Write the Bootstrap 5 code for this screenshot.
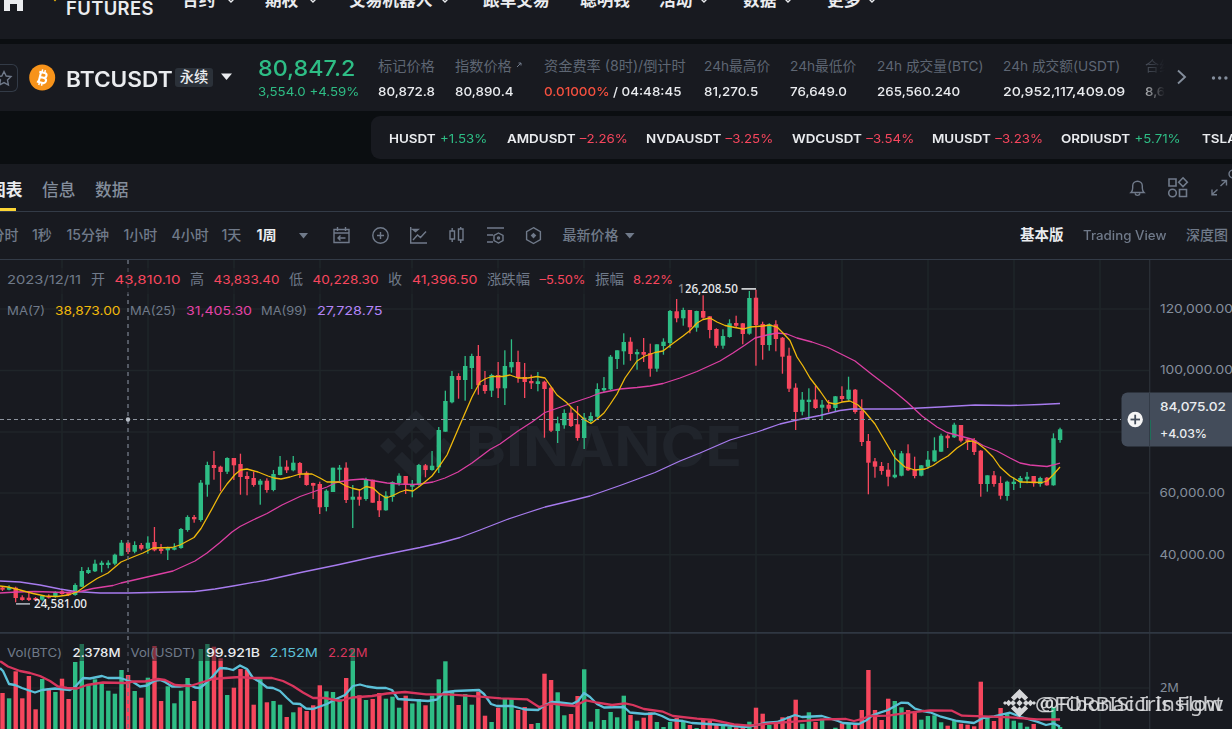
<!DOCTYPE html>
<html lang="zh-CN" data-bs-theme="dark">
<head>
<meta charset="utf-8">
<title>BTCUSDT 永续</title>
<link href="https://cdn.jsdelivr.net/npm/bootstrap@5.3.0/dist/css/bootstrap.min.css" rel="stylesheet">
<style>
:root{--panel:#181a20;--page:#0b0e11;--line:#333b47;--muted:#707a8a;--txt:#eaecef;--up:#2ebd85;--down:#f6465d;--gold:#f0b90b}
body{background:var(--page);color:var(--txt);font-family:Inter,"Noto Sans CJK SC",sans-serif;font-size:13px;line-height:20px;width:1232px;height:729px;overflow:hidden}
.panel-bg{background:var(--panel)}
.track{display:grid;align-items:center;justify-content:start;white-space:nowrap}
.muted{color:var(--muted)}.up{color:var(--up)}.down{color:var(--down)}
svg{display:block;overflow:visible}
.ico{fill:none;stroke:var(--muted);stroke-width:1.4}
.wide{transform:scaleX(1.09);transform-origin:left center}
.topnav{height:39px;overflow:hidden;margin-bottom:5px}
.topnav .track{height:24px;margin-top:-19px;grid-template-columns:54px 12px 116px 83px 84px 134px 97px 79px 84px 84px 60px;font-size:16.7px;font-weight:600}
.topnav .home{margin-top:4px}
.brand{font-size:18.4px;letter-spacing:.4px;padding-top:17px;font-weight:600}
.menu-item{display:flex;align-items:center;gap:8px}
.menu-item.roomy{gap:11px}
.symbol{height:67px;margin-bottom:5px}
.symbol .track{height:67px;grid-template-columns:29px 37px 109px 45px 38px 120px 77px 89px 160px 86px 87px 126px 142px 36px 34px 18px}
.starbox{width:18px;height:28px;border:1px solid #333b47;border-left:0;border-radius:0 6px 6px 0}
.pair{font-size:20.8px;font-weight:600;padding-top:4px}
.tagbox{background:#2b3139;border-radius:3px;font-size:14.3px;font-weight:500;width:38px;height:19px;line-height:18px;text-align:center}
.lastp{font-size:22px;line-height:25px;font-weight:500;padding-top:3px;transform:scaleX(1.06);transform-origin:left center}
.chg{font-size:12.2px;line-height:20px;padding-top:1px}
.stat{padding-top:3px}
.stat .lab{font-size:14.2px;line-height:20px;color:#5e6673;font-weight:400}
.stat .lat{font-size:13.7px}
.stat .val{font-size:12.2px;line-height:20px;font-weight:500;margin-top:6px;transform:scaleX(1.1);transform-origin:left center}
.stat .val.longer{transform:scaleX(1.16)}
.fund{color:#f6503f}
.faded{-webkit-mask-image:linear-gradient(90deg,#000b,#0000 20px);mask-image:linear-gradient(90deg,#000b,#0000 20px);overflow:hidden;width:20px}
.ticker{height:43px;margin-left:371px;border-radius:9px 0 0 9px;margin-bottom:5px;overflow:hidden}
.ticker .track{height:45px;padding-left:18px;grid-template-columns:118px 139px 146px 139.5px 129.5px 141px 50px;font-size:12.2px}
.ticker b{font-weight:600;font-size:12.3px;margin-right:4px}
.tabsrow{height:48px;border-bottom:1px solid var(--line);font-size:16.7px;font-weight:500;color:#848e9c}
.tabsrow .track{height:47px;grid-template-columns:42px 53px 1035px 37px 42px 40px;padding-top:4px}
.tabsrow svg{margin-top:-4px}
.tabon{font-weight:700;margin-left:-11px;position:relative}
.tabon::after{content:"";position:absolute;left:0;bottom:-11px;width:27px;height:3px;background:#fcd535}
.timerow{height:48px;border-bottom:1px solid var(--line);font-size:14px;font-weight:500;color:var(--muted)}
.timerow .track{height:46px;grid-template-columns:32px 34.5px 57px 48px 50px 35px 42px 33px 39px 38px 39px 38px 39px 38px 62px 395.5px 63px 103px 50px}
.first-int{margin-left:-9.500px}
.tv{font-size:12.7px;padding-top:2px;transform:scaleX(1.05);transform-origin:left center}
.basic{font-size:14.500px}
.on{color:var(--txt);font-weight:700}
.chart{height:469px;overflow:hidden}
.chart text{font-family:Inter,"Noto Sans CJK SC",sans-serif}
</style>
</head>
<body>
<header class="topnav panel-bg">
  <div class="track">
    <svg class="home" width="24" height="24" viewBox="0 0 24 24"><path d="M4 8L13.500 0 23 8V21H17V14H10V21H4Z" fill="#eaecef"/></svg>
    <svg width="5" height="5" viewBox="0 0 5 5"><path d="M-1.500 1.500h5L1 4.500Z" fill="#f0b90b"/></svg>
    <div class="brand">FUTURES</div>
    <div class="menu-item roomy">合约<svg width="10" height="6"><path d="M1 1l4 4 4-4" fill="none" stroke="#eaecef" stroke-width="1.400"/></svg></div>
    <div class="menu-item roomy">期权<svg width="10" height="6"><path d="M0 1l4 4 4-4" fill="none" stroke="#eaecef" stroke-width="1.400"/></svg></div>
    <div class="menu-item">交易机器人<svg width="10" height="6"><path d="M1 1l4 4 4-4" fill="none" stroke="#eaecef" stroke-width="1.400"/></svg></div>
    <div>跟单交易</div>
    <div>聪明钱</div>
    <div class="menu-item">活动<svg width="10" height="6"><path d="M0 1l4 4 4-4" fill="none" stroke="#eaecef" stroke-width="1.400"/></svg></div>
    <div class="menu-item">数据<svg width="10" height="6"><path d="M0 1l4 4 4-4" fill="none" stroke="#eaecef" stroke-width="1.400"/></svg></div>
    <div class="menu-item">更多<svg width="10" height="6"><path d="M0 1l4 4 4-4" fill="none" stroke="#eaecef" stroke-width="1.400"/></svg></div>
  </div>
</header>

<section class="symbol panel-bg">
  <div class="track">
    <div class="starbox"><svg class="ico" width="18" height="26" viewBox="0 0 18 26"><path d="M4 6.500L6.200 11 11 11.600 7.500 15 8.400 20 4 17.600-.4 20 .5 15-3 11.600 1.800 11Z"/></svg></div>
    <svg width="27" height="27" viewBox="0 0 27 27"><circle cx="13.200" cy="13.500" r="13" fill="#f7931a"/><g transform="rotate(14 13 13.500)" fill="none" stroke="#fff" stroke-width="2.100"><path d="M9 8.500h5.500a2.400 2.400 0 0 1 0 4.900H10.500M10.500 13.400h4.600a2.600 2.600 0 0 1 0 5.200H9M10.800 8.500v10"/><path stroke-width="1.500" d="M11.700 5.500v3M14.500 5.500v3M11.700 18.600v3M14.500 18.600v3"/></g></svg>
    <div class="pair wide">BTCUSDT</div>
    <div class="tagbox">永续</div>
    <svg width="12" height="8"><path d="M1 -0.500H12L6.500 6Z" fill="#eaecef"/></svg>
    <div class="up"><div class="lastp">80,847.2</div><div class="chg wide">3,554.0 +4.59%</div></div>
    <div class="stat"><div class="lab">标记价格</div><div class="val">80,872.8</div></div>
    <div class="stat"><div class="lab d-flex align-items-center gap-1">指数价格<svg class="ico" width="8" height="12" viewBox="0 0 8 12"><path d="M1 7L5 3M2.500 3H5V5.500" stroke-width="1"/></svg></div><div class="val">80,890.4</div></div>
    <div class="stat"><div class="lab">资金费率 (8时)/倒计时</div><div class="val"><span class="fund">0.01000%</span> / 04:48:45</div></div>
    <div class="stat"><div class="lab lat">24h最高价</div><div class="val">81,270.5</div></div>
    <div class="stat"><div class="lab lat">24h最低价</div><div class="val">76,649.0</div></div>
    <div class="stat"><div class="lab lat">24h 成交量(BTC)</div><div class="val">265,560.240</div></div>
    <div class="stat"><div class="lab lat">24h 成交额(USDT)</div><div class="val longer">20,952,117,409.09</div></div>
    <div class="stat faded"><div class="lab">合约</div><div class="val">8,6</div></div>
    <svg width="10" height="16"><path d="M-3 0.500L4 7-3 13.500" fill="none" stroke="#848e9c" stroke-width="1.900"/></svg>
    <svg width="18" height="4" fill="#848e9c"><circle cx="-1.500" cy="2" r="1.700"/><circle cx="4.700" cy="2" r="1.700"/><circle cx="10.900" cy="2" r="1.700"/></svg>
  </div>
</section>

<section class="ticker panel-bg">
  <div class="track">
    <div class="wide"><b>HUSDT</b><span class="up">+1.53%</span></div>
    <div class="wide"><b>AMDUSDT</b><span class="down">–2.26%</span></div>
    <div class="wide"><b>NVDAUSDT</b><span class="down">–3.25%</span></div>
    <div class="wide"><b>WDCUSDT</b><span class="down">–3.54%</span></div>
    <div class="wide"><b>MUUSDT</b><span class="down">–3.23%</span></div>
    <div class="wide"><b>ORDIUSDT</b><span class="up">+5.71%</span></div>
    <div class="wide"><b>TSLAUSDT</b></div>
  </div>
</section>

<main class="panel-bg">
  <div class="tabsrow"><div class="track">
    <div class="tabon on">图表</div><div>信息</div><div>数据</div>
    <svg class="ico" width="16" height="18" viewBox="0 0 16 18"><path d="M1 13.500Q2.700 12 2.700 9V7a4.800 4.800 0 0 1 9.600 0v2q0 3 1.700 4.500Z M5 14.500a2.600 2.600 0 0 0 5 0"/></svg>
    <svg class="ico" width="22" height="22" viewBox="0 0 22 22"><path stroke-width="1.600" d="M2 2h7v7H2zM12.500 12.500h7v7h-7zM16 .8L20.300 5.300 16 9.600 11.700 5.300Z"/><circle cx="5.500" cy="16" r="3.800" stroke-width="1.600"/></svg>
    <svg class="ico" width="20" height="20" viewBox="0 0 20 20"><path d="M11.500 8L17.500 2.500M12.500 2.500h5v5M8.500 11.500L3 16.500M3 11.500v5.200h5"/><circle cx="24" cy="-4" r="4"/></svg>
  </div></div>
  <div class="timerow"><div class="track">
    <div class="first-int">分时</div><div>1秒</div><div>15分钟</div><div>1小时</div><div>4小时</div><div>1天</div><div class="on">1周</div>
    <svg width="11" height="6"><path d="M0 1H9L4.500 6.500Z" fill="#707a8a"/></svg>
    <svg class="ico" width="19" height="19" viewBox="0 0 19 19"><path d="M2 3.500h15v13H2zM2 7h15M5.500 1v4M13.500 1v4M13.500 12H6M8.500 9.500L6 12l2.500 2.500"/></svg>
    <svg class="ico" width="19" height="19" viewBox="0 0 19 19"><circle cx="9.500" cy="9.500" r="7.700"/><path d="M9.500 6v7M6 9.500h7"/></svg>
    <svg class="ico" width="19" height="19" viewBox="0 0 19 19"><path d="M1.700 1v16H18M4 14l4.500-5 3 2.500L17 5.500M4 3.500h5L6.500 5.500Z"/></svg>
    <svg class="ico" width="19" height="19" viewBox="0 0 19 19"><path d="M2 5h4.500v8H2zM10.500 3H15v11h-4.500zM4.200 2v3M4.200 13v3M12.700 1v2M12.700 14v3"/></svg>
    <svg class="ico" width="19" height="19" viewBox="0 0 19 19"><path d="M1 2h17M1 9h6M1 16h6M12.500 7L17 9.500v5L12.500 17 8 14.500v-5Z"/><circle cx="12.500" cy="12" r="1"/></svg>
    <svg class="ico" width="19" height="19" viewBox="0 0 19 19"><path d="M8.500 1.700L15.400 5.600v8L8.500 17.500 1.600 13.600v-8Z"/><path fill="#707a8a" stroke="none" d="M8.500 6.800L11.300 9.600 8.500 12.400 5.700 9.600Z"/></svg>
    <div>最新价格</div>
    <svg width="11" height="6"><path d="M0 1H9.500L4.750 6.500Z" fill="#707a8a"/></svg>
    <div class="on basic">基本版</div><div class="tv">Trading View</div><div>深度图</div>
  </div></div>
  <div class="chart"><svg id="plot" width="1232" height="469" viewBox="0 260 1232 469"></svg></div>
</main>

<script src="https://cdn.jsdelivr.net/npm/bootstrap@5.3.0/dist/js/bootstrap.bundle.min.js"></script>
<script>
// Candles: direction, body top, body bottom, wick top, wick bottom
const candles = `r587.5,589.7,586.7,591 g587.3,589.7,585.3,590.3 r587.7,598,586.7,602.3 r597.3,600,595.3,600.7 r597.7,600,592.3,601 r598,600,597,601.3 g596,599.7,595.3,600.7 r596,597.7,594.3,598.5 g592,597,591.3,597.7 r591.3,594,589.7,594.7 r592.3,595.3,592,596 g585,595,583.3,595.7 g571,586.7,567,587 g570,573,567.3,574 g563.7,571.3,559.7,572 g562.7,565,560.7,572.3 g562.7,565,560.3,568.3 g554.7,563.7,553.7,565.3 g542.7,555.7,540,556 r542.7,552,542,554 g545,551.7,541.3,553.3 r545,548.7,543,550.3 g542.7,548.7,536.3,553.7 r542,550.3,527,551.3 r548.7,551,544,553.7 g547.7,550.3,546.7,560 g547.3,549.7,543.3,550.3 g529,548,528,548.7 g517,530,515.3,531.7 r517,519.3,515,522.7 g482.7,520,480,521.7 g465,484.7,461.7,496.7 r465,468,451,479.7 r466.7,472,465.7,491.3 g458,471.7,457.3,474 r458,465.3,458,480 r464,477,453.7,494.7 r476,479,471.7,495.3 r478,485,471.7,486.7 g480.7,484.7,479,504.7 r480.7,490,478.3,492.7 g474,490,470,491.3 g466.7,475,456,475.3 r466.7,470.3,460.3,473 g462.7,470.3,456,471.3 r463,473.7,462,478 r472.7,485,471.3,485.7 r483,485.7,482.7,499 r484,507.3,481.7,514 g490.7,507,489.3,511.3 g467.7,492,467.7,492 g467.7,469.7,465,482.7 r467.7,500,462.3,503 g496.7,499.7,485,528 r496.7,499.7,489,505.7 g479.7,499,477.7,500.7 r479.7,502.7,479.7,502.7 r501,510.3,493.3,517 g495.7,510.3,491.3,510.7 g482,497,481.3,501.7 g475.7,483,473.3,485.7 r476,485,476,494 g484.3,486.7,480,497.3 g465,485,464,485.7 r465.3,470,464,477.3 g465.7,470,451,470.7 g430,467.3,427,473 g401,431.7,390.7,431.7 g376,402.3,371,403.3 r376,380,373.3,398.7 g366,380,356,400.7 g356,368,353.7,389 r356,385.3,345,394.7 r385,391,371,393.7 g375,390.7,373.7,397 r375,388.3,362,398 g366,388.3,350.3,405 g362,367.3,339.3,372.7 r362,378,350.7,382.7 r377,382,363,398 r381,383.3,374.7,389 g381.3,384,372,391.3 r381.7,389,380.7,437.7 r387.7,430.7,386.7,432 g423.3,431,416.7,443 g413,425.3,409.3,428.7 r412.7,426,407.3,427 r424.3,438,406,440.7 g417.7,438,413,449 g416,421,412.3,423 g389,416.7,383.3,417.7 g388,390.3,377,392.3 g356.7,389.3,355,390 g350.3,359,350.3,369 g342,351.3,333.3,364.7 r341.7,354,337.3,360.7 g352,354.3,349.3,369.7 r352,354.7,338,362 r353,368.7,343.7,376.7 g344.3,368.7,344.3,371.7 g341.7,346,338.3,354.7 g311,343,310,348 r311.3,318.3,299,322.3 g310,318.3,307.7,325.7 r310,327.3,310,333.3 g311,327.7,310.7,331.7 r311,317.7,295.3,318.7 r316.3,330,316,338.3 r329,345.7,328.3,348 g336,345.7,329.3,348.7 g323.3,337,319.3,337.7 r323,325.7,315.7,327 r323.3,334,323,344.3 g298,333.7,291,334.7 r297.7,325,289.7,365.7 r324,345,321.7,359.7 g324.3,345,323.3,350.7 r324.3,339,320.3,351.3 r337.7,356.7,337,373.7 r355.7,388.7,347.7,392 r387.7,412,383.3,430 g399.7,411.7,392,415.3 g399.7,402,388.3,420 r399.5,408,386,409 g404.7,407.7,400,419.3 r404.7,408.7,400,412.3 g396.3,408,396,411.3 r396,399,386.3,402 g389.7,399.3,376.7,400.7 r389.7,412,389,413.7 r410.7,442,399.3,446 r441,462.7,434,494.3 r461.3,466.7,458,477.7 r466,471,462,474.7 r469.7,476.7,463,486.3 g474.7,477.3,450,478.3 g453.3,475.7,451,476.3 r453.3,470.3,444.3,471 r469.3,476,456.7,478.3 g465.3,475.7,465,476.3 g459.7,466.7,451,469 g450.3,461.3,437.3,462 g435.7,451.7,433.7,452 r435.7,438.3,434.3,448 g424.7,437.3,422.7,438 r425,440.7,425,442.3 r439.3,441.7,438.3,450 r440,452,438,455 r450.7,484,450,496.7 g475.3,484,475.3,491.7 r475.3,484,471,486.7 r483,495.7,476.3,499.3 g481.7,496,480.7,500.7 g481.7,484,477.3,490 g478,482,476,488 g476.7,479.3,472,483.3 r476,483.3,476,486.7 g478,484,476.7,486.7 r477.7,485.3,477,485.7 g438.3,485.3,433.3,485.7 g429.3,440,427.7,442.7`.split(' ').map(s=>[s[0],...s.slice(1).split(',').map(Number)]);
const volume=[693,698.3,671.3,698.3,676,709.3,679,688.3,692,678.7,699,662,644,684,679.3,683.3,690.7,693.7,670,675,691,697.7,677.7,646,701,686.3,703.3,690.7,678,701,649,644,646.7,658.3,695,687.7,669,669.7,704.7,678.3,702.3,701,704.7,717,712.3,707.3,711,705.3,685.3,691.3,692,699.3,678,648.3,695.3,700,699,693,698.7,696.7,707.7,695.7,703.5,699,705.3,695.7,679.3,661.3,690.7,705,694,704.7,691.7,715.7,722,707.7,698.7,698.7,710,707,724,723,673.7,680,692.3,715.3,714,696,669.3,721.7,709,720,712,717.3,695.7,715,720.7,717.7,712.3,722,727,722,718,721.3,725,728,719.3,720.7,724.7,725,726.7,727.3,726.7,721.7,707.7,713.7,725,722,717.3,716.3,699.7,723.7,712.3,722,718.7,729,727.7,723.3,723.3,724.3,710,670,710,720,698.7,701,707.3,710,713,719.7,716,715.3,722.3,725.7,720.3,723.7,724.7,726.3,681.7,717.3,721,708,713.3,720.7,722.7,726.7,724,729,729,707,727];
const ma7='0,586 8,587 20,590 33,593.5 45,596 57,596.5 68,595 77,592 87,585 97,578.5 108,573 121,562 133,557 143,553 153,548 172,547.5 180,545 194,537.5 201,528.5 213,507 220,494 227,484 235,474.5 240.5,470 247,469 258,472 268,476 274,478 281,479 290,477 300,474 312,474 320,478 327,482 339,482 346,486 353,488.5 360,490 366,486.5 373,488 379,493.5 386,498 393,495.5 400,492 406,490 413,491 420,486 432,476 439,466.7 447,455 459,427 472,397 480,382 486,378.5 492,376.5 503,376.5 510,375 518,378 528,378 537,376.5 545,378 557,395 566,402 573,409 585,420 591,423.5 597,419 604,413 610,404.500 617,394 625,378 637,361 645,356 655,352.5 663,351 670,345.5 683,336 690,330.5 697,323 703,319.5 710,318 717,322 725,325.5 735,327.5 743,329 750,327 763,326 770,325 777,327 783,333 790,340.5 797,357 803,366 810,378 820,391 828,402.5 835,404 842,402 850,401 858,405 865,412 875,424 885,441 895,458 905,467 915,470 925,469 933,465.5 941,460 948,456 957,448 967,441.5 972,441 978,443.5 985,449 993,457 1000,467 1010,476 1020,482 1042,482.5 1047,481 1053,475 1060,467';
const ma25='0,593 17,592 35,591.5 65,592.5 80,591.5 93,588.5 113,585.5 121,583 147,577 173,571 195,561 207,553 220,542.5 232,532 240,526.5 253,520 267,513.5 282,505 300,496.5 317,490.5 327,487 336,482.5 350,480 363,479 375,481 387,483 400,484 413,484.5 420,484 433,482 445,478 458,472 472,463 490,449.5 500,444 518,431 532,422 545,412.5 558,408 572,403 590,397 600,393 610,391 620,389 637,387.5 650,386 663,383.5 680,378 697,371.5 720,361 733,353 745,345 755,338 767,335 777,333 787,334 797,338 812,342 828,347.5 855,361 872,374.5 895,392 907,402 922,416 937,427 947,432.5 960,436 973,439.5 983,445.5 997,451 1010,458 1020,463 1030,465 1047,466.5 1053,465 1060,463';
const ma99='0,581 20,582 40,585 60,589 75,591.5 100,593 128,593 195,591.5 215,589 233,586 267,580 303,572 337,565 373,557 400,551.5 420,547.5 440,543 460,537.5 480,530 507,519.5 525,513.5 545,507 570,501 590,496 620,485.5 635,480 655,472.5 680,461 700,453 730,440 757,432 780,424 797,420 820,415.5 840,410.5 852,409 900,409 940,407 975,405 1010,405.5 1040,404.5 1060,403.5';
const volFast='0,668 3,671 9,684 15,685 22,688 35,692.5 42,690 55,688.5 70,690 75,687 83,678 90,678.5 102,676 108,678 120,678 133,682 140,686.5 147,685.5 155,680.5 160,680 165,682 172,686.5 180,686.5 190,685 195,687.500 200,688 205,684 213,676 220,668 227,668.5 233,670 240,665.5 247,669 253,678 260,682 267,687.5 273,688 280,691 287,698 293,703.5 300,704 306,708.5 313,709 320,706.5 327,704 335,699.5 345,695 353,686 360,684.5 367,686.5 377,688 386,688 392,690 398,699 413,700 428,701 437,699.5 444,692.5 455,691 479,690 484,694 491,704 497,706 512,706 525,709.5 538,710 545,705 552,702 560,702.5 572,704 578,701 584,693 590,697 597,704 604,707.5 624,707 630,712.5 645,714 655,713.5 662,716 670,720 683,721 692,723 724,725 745,727 757,725 766,722.7 777,722 795,715 802,717 822,716 838,721 843,723 859,724 867,720 872,715.7 880,712.7 888,710 901,702.7 908,703 915,708.7 923,711 930,712.3 941,716.7 957,721 974,723 983,718 994,716.3 1010,712.7 1021,717 1037,721.7 1046,725 1053.5,723.3 1060,726.7';
const volSlow='0,661 8,666.5 20,671 30,673 40,676 50,681 58,686.5 67,688 77,688.5 87,685 103,682.5 125,683 133,681.5 145,681.5 158,679 165,680 175,685 190,686 203,682 213,679 225,678 240,677 250,678 272,678 283,681 293,686 303,692.5 313,698 325,698 340,701 352,697.5 372,696 387,693.5 405,692 426,694.3 448,694.3 480,696.7 501,698.3 527,699.3 539,707 551,703.7 564,705 575,706 586,700.3 596,702.3 612,705 625,703.3 633,705 644,709 663,711.7 673,716 697,718.7 713,720 734,724.3 750,725.7 771,723.3 798,721.3 824,719.3 846,719 854,721 864,718.3 869,716 888,715.7 909,712.7 930,710.3 952,710.7 962,715.7 984,716.3 1010,717.3 1037,719.3 1060,719.5';

const UP='#2ebd85', DOWN='#f6465d', MUTED='#707a8a', out=[];
const add=s=>out.push(s);
const line=(x1,y1,x2,y2,c,w=1,extra='')=>add(`<line x1="${x1}" y1="${y1}" x2="${x2}" y2="${y2}" stroke="${c}" stroke-width="${w}" ${extra}/>`);
const label=(x,y,w,t,c,size=12.2,weight=400,extra='')=>add(`<text x="${x}" y="${y}" ${w?`textLength="${w}" lengthAdjust="spacingAndGlyphs"`:''} fill="${c}" font-size="${size}" font-weight="${weight}" ${extra}>${t}</text>`);
const rect=(x,y,w,h,c,extra='')=>add(`<rect x="${x}" y="${y}" width="${w}" height="${h}" fill="${c}" ${extra}/>`);
const poly=(p,c,w)=>add(`<polyline points="${p}" fill="none" stroke="${c}" stroke-width="${w}" stroke-linejoin="round"/>`);
const logo='M16.624 13.920l2.717 2.715-7.353 7.353-7.353-7.352 2.717-2.716 4.636 4.659 4.636-4.659zm4.637-4.637L24 12l-2.715 2.716L18.568 12l2.693-2.716zm-9.272.001l2.716 2.691-2.716 2.717L9.272 12l2.716-2.715zm-9.272-.001L5.409 12l-2.691 2.692L0 12l2.716-2.716zM11.989.011l7.353 7.329-2.717 2.715-4.636-4.635-4.636 4.659-2.717-2.715 7.353-7.353z';

// Grid and separators
[62,148,234,320,412,498,584,670,756,842,928,1014,1100].forEach(x=>line(x,260,x,729,'#1f2529',1.6));
[309,370.500,432,493,554.700,688].forEach(y=>line(0,y,1149,y,'#1f2529',1.4));
line(1149.7,260,1149.7,729,'#2a3037',1.3);
line(0,632.8,1232,632.8,'#2f3742',1.800);
add(`<path transform="translate(380 410) scale(3)" d="${logo}" fill="#20242b"/>`);
label(466,466,276,'BINANCE','#20242b',55,700);

candles.forEach(([d,t,b,h,l],i)=>{
  const x=2.4+6.61*i,c=d==='g'?UP:DOWN;
  rect((x-.6).toFixed(1),h,1.3,l-h,c);
  rect((x-2.1).toFixed(1),t,4.4,Math.max(b-t,1.5),c);
  if(volume[i]<729) rect((x-2.1).toFixed(1),volume[i],4.4,729-volume[i],c);
});
poly(ma99,'#a77bee',1.3);poly(ma25,'#dc3fa3',1.3);poly(ma7,'#f0b90b',1.3);
poly(volFast,'#5cc0d8',2.3);poly(volSlow,'#d9365e',2.3);
line(128,260,128,729,'#6d7582',1.4,'stroke-dasharray="4 4"');
line(0,419.5,1121,419.5,'#8d949e',1,'stroke-dasharray="4 3"');
add('<circle cx="128" cy="419.500" r="2.200" fill="#b7bdc6"/>');

// Extremes
const cond=`style="font-family:'Noto Sans','Noto Sans CJK SC',sans-serif"`;
label(678,293.4,60,'126,208.50','#eaecef',13,500,cond);line(741.5,288.9,756,288.9,'#eaecef',1.5);
label(34,608.3,53,'24,581.00','#eaecef',13,500,cond);line(16,603.9,30,603.9,'#b7bdc6',1.5);

// Legends
rect(0,268,686,26,'#181a20','opacity=".5"');rect(0,642,372,19,'#181a20','opacity=".5"');
[[7,74,'2023/12/11',MUTED],[91,14,'开',MUTED],[114.5,66,'43,810.10',DOWN],[190,14,'高',MUTED],[213.5,66,'43,833.40',DOWN],[289,14,'低',MUTED],[312.5,66,'40,228.30',DOWN],[388,14,'收',MUTED],[412,65.5,'41,396.50',DOWN],[487,43,'涨跌幅',MUTED],[539.5,46,'–5.50%',DOWN],[595,29,'振幅',MUTED],[633,40,'8.22%',DOWN]].forEach(a=>label(a[0],284,a[1],a[2],a[3],/[0-9]/.test(a[2])?12.2:14));
[[7,38,'MA(7)',MUTED],[55,65.5,'38,873.00','#f0b90b'],[130,46,'MA(25)',MUTED],[186,66,'31,405.30','#e343a6'],[261,46,'MA(99)',MUTED],[317,65.5,'27,728.75','#b385f8']].forEach(a=>label(a[0],315,a[1],a[2],a[3]));
[[7,55,'Vol(BTC)',MUTED],[72.500,48,'2.378M','#eaecef',500],[130.500,65,'Vol(USDT)',MUTED],[206,54,'99.921B','#eaecef',500],[269.500,48.500,'2.152M','#5cc0d8'],[328,39.500,'2.22M','#d9365e']].forEach(a=>label(a[0],657,a[1],a[2],a[3],12.2,a[4]||400));

// Price axis
[[313,'120,000.00'],[374,'100,000.00']].forEach(a=>label(1160,a[0],73,a[1],'#848e9c'));
[[497,'60,000.00'],[559,'40,000.00']].forEach(a=>label(1159.5,a[0],65.500,a[1],'#848e9c'));
label(1160,692,19,'2M','#848e9c',12,400,cond);
rect(1121.5,392.5,118,54,'#434c5a','rx="6"');line(1149.5,393,1149.5,446,'#333b47');line(1150.5,420,1150.5,440,'#1e6f58');
add('<circle cx="1135.200" cy="419.500" r="7.700" fill="#f5f5f5"/>');
line(1130.5,419.5,1140,419.5,'#434c5a',1.8);line(1135.2,414.7,1135.2,424.3,'#434c5a',1.8);
label(1160,411,66,'84,075.02','#eaecef',12.2,500);label(1160,438,47,'+4.03%','#eaecef',12.2,500);

// Creator signature over the volume pane
add('<g fill="#e4e5e7" opacity=".93">');
add(`<path transform="translate(1005.500 689) scale(1.170)" d="${logo}"/>`);
[[1005,703,2],[1019.5,696.5,3],[1019.5,709.5,3],[1013,703,3],[1026,703,3],[1034,703,2]].forEach(([x,y,r])=>add(`<path d="M${x-r} ${y}l${r}-${r} ${r} ${r}-${r} ${r}z"/>`));
add('</g>');
label(1035,711,188,'@FORBISi Iris Flow','#e4e5e7',20.5,400,cond+' opacity=".85"');
label(1040,711,183,'@Fibonacci Insight','#e4e5e7',20.5,400,cond+' opacity=".85"');
document.getElementById('plot').innerHTML=out.join('');
</script>
</body>
</html>
